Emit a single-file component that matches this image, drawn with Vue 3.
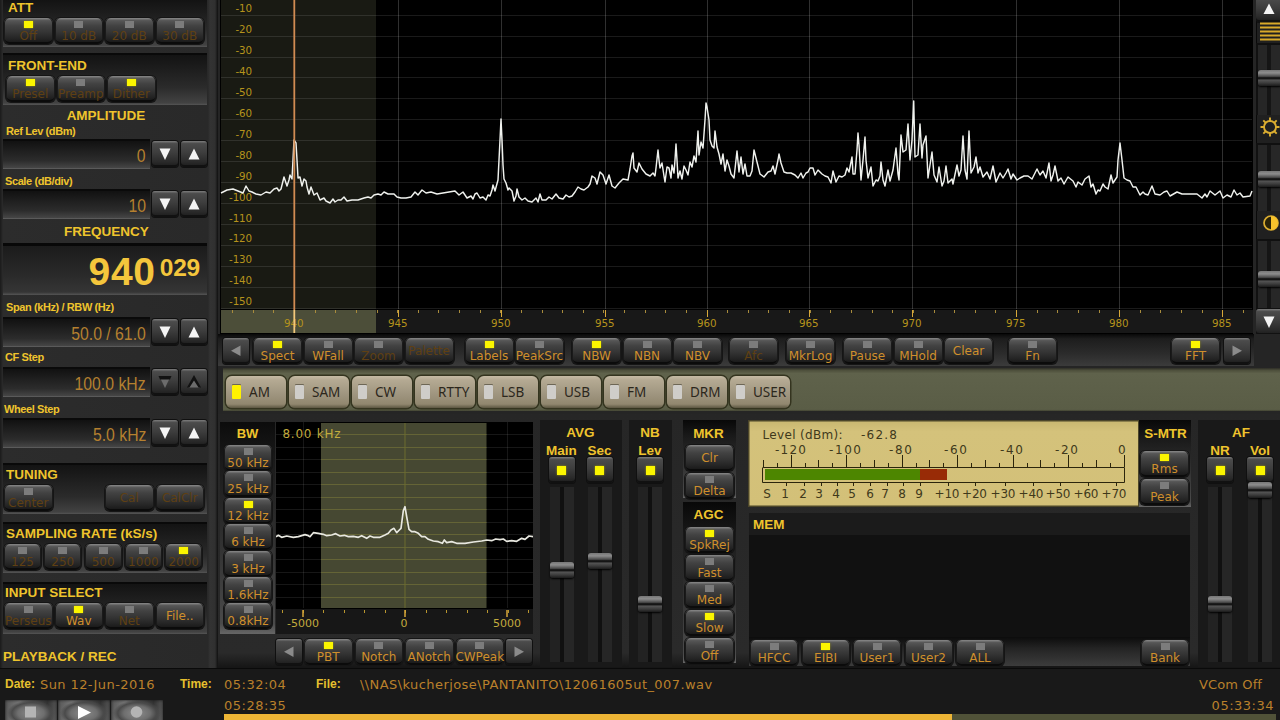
<script setup>
const att = [
  { t: 'Off', on: true, dim: true }, { t: '10 dB', dim: true }, { t: '20 dB', dim: true }, { t: '30 dB', dim: true },
]
const front = [
  { t: 'Presel', on: true, dim: true }, { t: 'Preamp', dim: true }, { t: 'Dither', on: true, dim: true },
]
const fields = {
  amp: [{ label: 'Ref Lev (dBm)', value: '0', k: 'a' }, { label: 'Scale (dB/div)', value: '10', k: 'b' }],
  freq: [
    { label: 'Span (kHz) / RBW (Hz)', value: '50.0 / 61.0', k: 'c' },
    { label: 'CF Step', value: '100.0 kHz', k: 'd', off: true },
    { label: 'Wheel Step', value: '5.0 kHz', k: 'e' },
  ],
}
const tuning = [{ t: 'Center', dim: true }, { gap: true }, { t: 'Cal', dim: true, plain: true }, { t: 'CalClr', dim: true, plain: true }]
const rates = [
  { t: '125', dim: true }, { t: '250', dim: true }, { t: '500', dim: true }, { t: '1000', dim: true }, { t: '2000', dim: true, on: true },
]
const inputs = [{ t: 'Perseus', dim: true }, { t: 'Wav', on: true }, { t: 'Net', dim: true }, { t: 'File..', plain: true }]

const tools = [
  [{ t: 'Spect', on: true }, { t: 'WFall' }, { t: 'Zoom', dim: true }, { t: 'Palette', dim: true, plain: true }],
  [{ t: 'Labels', on: true }, { t: 'PeakSrc' }],
  [{ t: 'NBW', on: true }, { t: 'NBN' }, { t: 'NBV' }],
  [{ t: 'Afc', dim: true }],
  [{ t: 'MkrLog' }],
  [{ t: 'Pause' }, { t: 'MHold' }, { t: 'Clear', plain: true }],
  [{ t: 'Fn' }],
  [{ t: 'FFT', on: true }],
]
const modes = ['AM', 'SAM', 'CW', 'RTTY', 'LSB', 'USB', 'FM', 'DRM', 'USER']
const bws = ['50 kHz', '25 kHz', '12 kHz', '6 kHz', '3 kHz', '1.6kHz', '0.8kHz']
const filters = [{ t: 'PBT', on: true }, { t: 'Notch' }, { t: 'ANotch' }, { t: 'CWPeak' }]
const agc = [{ t: 'SpkRej', on: true }, { t: 'Fast' }, { t: 'Med' }, { t: 'Slow', on: true }, { t: 'Off' }]
const mems = [{ t: 'HFCC' }, { t: 'EIBI', on: true }, { t: 'User1' }, { t: 'User2' }, { t: 'ALL' }]

const dbLines = Array.from({ length: 15 }, (_, i) => ({ db: -10 * (i + 1), y: Math.round(14.6 + i * 20.95) + 0.5, ty: 12 + i * 20.95 }))
const fLines = [294.5, 398.5, 501.5, 605.5, 707.5, 809.5, 912.5, 1016.5, 1119.5, 1222.5].map((x, i) => ({ x, f: 940 + i * 5 }))
const fTicks = Array.from({ length: 50 }, (_, i) => Math.round(294 + (i - 3) * 20.63) + 0.5).filter((x) => x < 1252)

const trace = `221,193 227,190 233,189 238,191 243,193 246,186 249,191 252,192 256,194 261,195 266,192 270,193 274,189 277,188 279,191 281,189 283,181 284,177 287,186 289,180 290,175 292,179 293,160 294,140 296,143 297,160 298,178 300,177 302,186 304,179 306,181 307,187 309,194 311,187 314,195 317,193 320,200 324,198 326,201 330,203 333,199 335,202 338,200 341,200 344,197 347,201 352,200 358,200 364,198 368,197 371,198 374,195 378,194 381,195 384,192 388,194 394,194 397,197 401,198 406,198 411,197 415,192 418,195 422,190 426,193 431,192 437,194 443,193 449,192 455,191 459,195 463,192 467,198 471,196 473,199 475,194 477,193 480,198 483,197 486,200 488,195 490,196 492,190 493,185 495,191 498,180 499,160 500,140 501,119 502,140 503,165 504,179 506,183 508,190 509,188 512,191 514,201 516,196 517,189 519,197 522,200 525,198 528,201 532,202 536,198 538,202 540,194 542,200 546,200 549,197 552,199 556,194 559,198 563,199 566,195 569,197 572,196 575,192 578,187 581,189 584,190 588,187 590,184 592,176 595,178 597,184 600,172 603,175 606,184 609,175 612,186 615,188 619,183 623,179 628,180 630,169 632,156 633,153 634,168 637,172 639,163 642,169 646,174 650,176 653,173 655,176 656,168 658,150 659,160 660,168 662,163 664,176 665,182 667,167 669,168 671,178 672,165 674,173 675,160 676,144 677,160 678,178 680,171 682,179 684,166 686,170 688,175 690,162 692,167 694,156 696,162 698,131 699,155 701,142 703,148 705,120 706,103 707,107 709,120 710,140 712,146 714,148 715,131 717,147 719,154 721,164 723,154 725,171 727,160 729,166 731,174 734,178 737,151 739,172 741,157 743,174 745,164 747,176 750,176 752,171 754,150 757,162 760,174 764,177 768,172 771,171 773,166 775,174 778,160 779,154 781,163 784,172 787,173 791,173 795,175 798,178 801,173 803,178 806,173 808,172 810,168 813,168 815,175 818,170 822,174 825,176 828,177 831,183 833,171 836,182 839,176 842,177 845,175 847,168 849,172 852,157 853,174 855,174 857,150 858,133 859,145 861,180 863,160 865,137 866,160 868,178 871,167 873,186 876,180 878,181 880,176 881,162 883,180 885,186 888,170 890,181 893,170 896,148 898,174 899,180 901,135 903,152 906,150 908,124 910,160 912,140 913.7,101 915,157 918,155 920,124 922,158 923,145 926,136 928,178 932,152 934,175 937,182 939,167 942,186 944,181 946,166 948,183 952,179 953,184 957,165 959,176 961,170 963,136 965,170 967,179 969,131 971,173 974,167 976,157 978,173 980,167 983,177 987,172 990,179 993,166 996,182 1000,173 1003,178 1006,173 1008,169 1011,179 1013,174 1017,180 1020,178 1024,176 1028,176 1032,179 1037,169 1040,175 1043,171 1046,178 1049,163 1051,181 1053,175 1055,166 1058,181 1061,178 1064,184 1068,177 1073,181 1076,187 1078,182 1082,185 1085,179 1089,176 1091,187 1093,184 1096,194 1098,190 1100,191 1103,184 1105,187 1108,189 1111,175 1113,183 1117,177 1118,160 1120,143 1122,160 1124,178 1127,180 1130,181 1133,187 1136,187 1140,195 1143,192 1145,194 1148,195 1152,186 1155,194 1160,195 1164,192 1167,191 1170,196 1177,192 1182,194 1188,194 1197,194 1202,198 1205,194 1207,197 1210,191 1215,195 1220,191 1223,198 1227,195 1231,197 1234,190 1237,195 1240,193 1243,197 1250,196 1252,191`
const passTrace = `183,350 190,346 200,352 215,348 235,352 250,350 270,344 280,347 285,350 295,338 310,340 325,343 335,347 350,345 362,341 375,348 388,346 400,350 415,349 430,352 440,347 455,355 465,348 475,352 495,352 510,345 520,340 528,330 537,325 545,338 553,330 558,325 565,272 570,260 575,290 582,328 590,335 600,335 610,340 620,350 630,350 640,358 655,363 670,365 682,370 688,360 695,368 710,365 725,370 750,370 775,366 800,363 815,360 830,362 842,357 855,359 865,357 875,364 890,362 905,364 920,355 930,358 942,348 955,350`
const passRows = Array.from({ length: 14 }, (_, i) => Math.round(434 + i * 12.5) + 0.5)
const passTicks = Array.from({ length: 13 }, (_, i) => Math.round(282 + i * 20.5) + 0.5)

const meterTop = Array.from({ length: 27 }, (_, i) => ({ x: Math.round(763 + i * 13.87) + 0.5, y: i % 4 === 2 ? 455 : i % 4 === 0 ? 460 : 463 }))
const meterDb = [['-120', 775, 31], ['-100', 829, 32], ['-80', 889, 23], ['-60', 944, 23], ['-40', 1000, 23], ['-20', 1055, 23], ['0', 1118, 8]]
const meterS = [['S', 767], ['1', 785], ['2', 803], ['3', 819], ['4', 836], ['5', 852], ['6', 870], ['7', 885], ['8', 902], ['9', 919]]
const meterPlus = [['+10', 947], ['+20', 974.5], ['+30', 1003], ['+40', 1031], ['+50', 1058], ['+60', 1086], ['+70', 1114]]
const meterLow = [786.5, 804.5, 821.5, 837.5, 853.5, 870.5, 887.5, 903.5, 920.5, 948.5, 975.5, 1005.5, 1033.5, 1060.5, 1088.5, 1116.5]
const rail = ['menu', 'sun', 'contrast']
</script>

<template>
  <div class="radio">
    <div class="top">
      <aside class="left">
        <section class="sec s-att">
          <h3>ATT</h3>
          <div class="keys"><button v-for="b in att" :key="b.t" class="btn" :class="b"><i></i><span>{{ b.t }}</span></button></div>
        </section>
        <section class="sec s-front">
          <h3>FRONT-END</h3>
          <div class="keys"><button v-for="b in front" :key="b.t" class="btn" :class="b"><i></i><span>{{ b.t }}</span></button></div>
        </section>
        <h2 class="h-amp">AMPLITUDE</h2>
        <template v-for="f in fields.amp" :key="f.k">
          <label :class="'l-' + f.k">{{ f.label }}</label>
          <div class="frow">
            <div class="field"><span>{{ f.value }}</span></div>
            <button class="sq"><svg viewBox="0 0 26 26"><path d="M7.500 7.500H18.500L13 19Z" /></svg></button>
            <button class="sq"><svg viewBox="0 0 26 26"><path d="M7.500 18.500H18.500L13 7.500Z" /></svg></button>
          </div>
        </template>
        <h2 class="h-freq">FREQUENCY</h2>
        <div class="freq"><b>940</b><em>029</em></div>
        <template v-for="f in fields.freq" :key="f.k">
          <label :class="'l-' + f.k">{{ f.label }}</label>
          <div class="frow">
            <div class="field"><span>{{ f.value }}</span></div>
            <button class="sq" :class="{ off: f.off }"><svg viewBox="0 0 26 26"><path d="M7.500 7.500H18.500L13 19Z" /><path v-if="f.off" class="sh" d="M6.500 7H19.500L18 10.500H8Z" /></svg></button>
            <button class="sq" :class="{ off: f.off }"><svg viewBox="0 0 26 26"><path d="M7.500 18.500H18.500L13 7.500Z" /><path v-if="f.off" class="sh" d="M6 18.500L13 6L20 18.500H17.500L13 11.500L8.500 18.500Z" /></svg></button>
          </div>
        </template>
        <section class="sec s-tune">
          <h3>TUNING</h3>
          <div class="keys"><template v-for="(b, i) in tuning" :key="i"><div v-if="b.gap" class="hole"></div><button v-else class="btn" :class="b"><i></i><span>{{ b.t }}</span></button></template></div>
        </section>
        <section class="sec s-rate">
          <h3>SAMPLING RATE (kS/s)</h3>
          <div class="keys narrow"><button v-for="b in rates" :key="b.t" class="btn" :class="b"><i></i><span>{{ b.t }}</span></button></div>
        </section>
        <section class="sec s-input">
          <h3>INPUT SELECT</h3>
          <div class="keys"><button v-for="b in inputs" :key="b.t" class="btn" :class="b"><i></i><span>{{ b.t }}</span></button></div>
        </section>
        <h3 class="play">PLAYBACK / REC</h3>
      </aside>

      <main class="main">
        <div class="plotrow">
          <svg class="plot" viewBox="220 0 1033 334" width="1033" height="334">
            <rect x="220" y="0" width="1033" height="334" fill="#000" />
            <rect x="221" y="0" width="155" height="309" fill="#191a13" />
            <rect x="221" y="310" width="1032" height="23" fill="#181818" />
            <rect x="221" y="310" width="155" height="23" fill="#4c4e39" />
            <g stroke="#fff" stroke-opacity=".1"><line v-for="l in dbLines" :key="l.db" x1="221" x2="1252" :y1="l.y" :y2="l.y" /></g>
            <g stroke="#fff" stroke-opacity=".19"><line v-for="l in fLines" :key="l.f" :x1="l.x" :x2="l.x" y1="0" y2="309" /></g>
            <g class="ax" text-anchor="end"><text v-for="l in dbLines" :key="l.db" x="252" :y="l.ty">{{ l.db }}</text></g>
            <g stroke="#a88b3c"><line v-for="x in fTicks" :key="x" :x1="x" :x2="x" y1="310" y2="313" /></g>
            <g stroke="#d8a83a"><line v-for="l in fLines" :key="l.f" :x1="l.x" :x2="l.x" y1="310" y2="317" /></g>
            <g class="ax" text-anchor="middle"><text v-for="l in fLines" :key="l.f" :x="l.x - 0.8" y="327">{{ l.f }}</text></g>
            <polyline :points="trace" fill="none" stroke="#f0f2ee" stroke-width="1.450" stroke-linejoin="round" />
            <line x1="294.300" x2="294.300" y1="0" y2="310" stroke="#d08b52" stroke-width="1.800" />
            <line x1="294.300" x2="294.300" y1="310" y2="333" stroke="#f2c87a" stroke-width="1.800" />
          </svg>
          <div class="rail">
            <button class="sq up"><svg viewBox="0 0 26 26"><path d="M7.500 18H18.500L13 7.500Z" /></svg></button>
            <template v-for="r in rail" :key="r">
              <div class="ric" :class="r">
                <svg v-if="r === 'menu'" viewBox="0 0 24 24"><path d="M4 4.500H24M4 8.500H24M4 12.500H24M4 16.500H24M4 20.500H24" stroke="#d8a929" stroke-width="2" /></svg>
                <svg v-else-if="r === 'sun'" viewBox="0 0 24 24" fill="none" stroke="#dcae31" stroke-width="1.900"><circle cx="14" cy="12" r="6" /><path d="M14 6V2.500M14 18V21.500M8 12H4.500M20 12H23.500M9.800 7.800L7.300 5.300M18.200 7.800L20.700 5.300M9.800 16.200L7.300 18.700M18.200 16.200L20.700 18.700" /></svg>
                <svg v-else viewBox="0 0 24 24"><circle cx="15" cy="12" r="7" fill="#2a2308" stroke="#dcae31" stroke-width="1.700" /><path d="M15 5a7 7 0 0 1 0 14Z" fill="#f6c22c" /></svg>
              </div>
              <div class="rtrack" :class="'t-' + r"><div class="knob"></div></div>
            </template>
            <button class="sq"><svg viewBox="0 0 26 26"><path d="M7.500 7.500H18.500L13 19Z" /></svg></button>
          </div>
        </div>

        <div class="tools">
          <button class="sq grey"><svg viewBox="0 0 26 26"><path d="M17.500 7.500V18L8 12.800Z" /></svg></button>
          <div v-for="(g, i) in tools" :key="i" class="group" :class="'g' + i">
            <button v-for="b in g" :key="b.t" class="btn" :class="b"><i></i><span>{{ b.t }}</span></button>
          </div>
          <button class="sq grey"><svg viewBox="0 0 26 26"><path d="M8.500 7.500V18L18 12.800Z" /></svg></button>
        </div>

        <div class="modes">
          <button v-for="(m, i) in modes" :key="m" class="mode" :class="{ on: i === 0 }"><i></i><span>{{ m }}</span></button>
        </div>

        <div class="lower">
          <div class="bw">
            <h3>BW</h3>
            <button v-for="(b, i) in bws" :key="b" class="btn" :class="{ on: i === 2 }"><i></i><span>{{ b }}</span></button>
          </div>
          <div class="pass">
            <svg viewBox="276 422 257 212" width="257" height="212">
              <rect x="276" y="422" width="257" height="212" fill="#000" />
              <rect x="276" y="609" width="257" height="25" fill="#171717" />
              <rect x="321" y="423" width="165.500" height="185" fill="#464832" />
              <g stroke="#fff" stroke-opacity=".09"><line v-for="y in passRows" :key="y" x1="276" x2="533" :y1="y" :y2="y" /><line x1="303.500" x2="303.500" y1="422" y2="608" /><line x1="507.500" x2="507.500" y1="422" y2="608" /></g>
              <g stroke="#6b6b30" stroke-opacity=".65"><line v-for="y in passRows" :key="y" x1="321" x2="486.500" :y1="y" :y2="y" /><line x1="405" x2="405" y1="423" y2="608" stroke-width="1.600" /></g>
              <g stroke="#b8962f"><line v-for="x in passTicks" :key="x" :x1="x" :x2="x" y1="610" y2="613" /></g>
              <path d="M303 610V617M405 610V617M507 610V617" stroke="#d8a83a" stroke-width="1.500" />
              <text class="khz" x="282.500" y="438" textLength="58">8.00 kHz</text>
              <g class="khz sm" text-anchor="middle"><text x="303" y="626.500">-5000</text><text x="404" y="626.500">0</text><text x="507" y="626.500">5000</text></g>
              <g transform="translate(215 420) scale(.33333)"><polyline :points="passTrace" fill="none" stroke="#e8e8e0" stroke-width="5" stroke-linejoin="round" /></g>
            </svg>
            <div class="filters">
              <button class="sq grey"><svg viewBox="0 0 26 26"><path d="M17.500 7.500V18L8 12.800Z" /></svg></button>
              <button v-for="b in filters" :key="b.t" class="btn" :class="b"><i></i><span>{{ b.t }}</span></button>
              <button class="sq grey"><svg viewBox="0 0 26 26"><path d="M8.500 7.500V18L18 12.800Z" /></svg></button>
            </div>
          </div>
          <div class="sliders avg">
            <h3>AVG</h3>
            <div class="cols">
              <div class="sl p75"><h4>Main</h4><button class="sq led"><i></i></button><div class="track"><div class="knob"></div></div></div>
              <div class="sl p66"><h4>Sec</h4><button class="sq led"><i></i></button><div class="track"><div class="knob"></div></div></div>
            </div>
          </div>
          <div class="sliders nb">
            <h3>NB</h3>
            <div class="cols">
              <div class="sl p109"><h4>Lev</h4><button class="sq led"><i></i></button><div class="track"><div class="knob"></div></div></div>
            </div>
          </div>
          <div class="stack">
            <div class="box mkr">
              <h3>MKR</h3>
              <button class="btn plain"><span>Clr</span></button>
              <button class="btn"><i></i><span>Delta</span></button>
            </div>
            <div class="box agc">
              <h3>AGC</h3>
              <button v-for="b in agc" :key="b.t" class="btn" :class="b"><i></i><span>{{ b.t }}</span></button>
            </div>
          </div>
          <div class="right">
            <div class="meterrow">
              <svg class="meter" viewBox="748 420 391 87" width="391" height="87">
                <defs><linearGradient id="mg" x1="0" y1="0" x2="0" y2="1"><stop offset="0" stop-color="#c9b871" /><stop offset=".12" stop-color="#d4c27b" /><stop offset="1" stop-color="#d3c078" /></linearGradient></defs>
                <rect x="748" y="420" width="391" height="87" fill="#4b4529" />
                <rect x="749.500" y="421.500" width="388.500" height="84" fill="url(#mg)" />
                <text x="762.500" y="438.500" textLength="80">Level (dBm):</text>
                <text x="861" y="438.500" textLength="36">-62.8</text>
                <text v-for="m in meterDb" :key="m[0]" :x="m[1]" y="453.500" :textLength="m[2]">{{ m[0] }}</text>
                <rect x="765" y="469" width="155" height="11" fill="#4d8600" />
                <rect x="920" y="469" width="27" height="11" fill="#982b06" />
                <path d="M763 467.500H1124.500V482.500H762.500V467.500" fill="none" stroke="#2b250c" />
                <g stroke="#2b250c"><line v-for="t in meterTop" :key="t.x" :x1="t.x" :x2="t.x" :y1="t.y" y2="467" /><line v-for="x in meterLow" :key="x" :x1="x" :x2="x" y1="483" y2="486" /></g>
                <g text-anchor="middle"><text v-for="m in meterS" :key="m[0]" :x="m[1]" y="498">{{ m[0] }}</text><text v-for="m in meterPlus" :key="m[0]" :x="m[1]" y="498" textLength="25">{{ m[0] }}</text></g>
              </svg>
              <div class="box smtr">
                <h3>S-MTR</h3>
                <button class="btn on"><i></i><span>Rms</span></button>
                <button class="btn"><i></i><span>Peak</span></button>
              </div>
            </div>
            <div class="mem">
              <h3>MEM</h3>
              <div class="list"></div>
              <div class="memkeys">
                <button v-for="b in mems" :key="b.t" class="btn" :class="b"><i></i><span>{{ b.t }}</span></button>
                <button class="btn bank"><i></i><span>Bank</span></button>
              </div>
            </div>
          </div>
          <div class="sliders af">
            <h3>AF</h3>
            <div class="cols">
              <div class="sl p109"><h4>NR</h4><button class="sq led"><i></i></button><div class="track"><div class="knob"></div></div></div>
              <div class="sl p0"><h4>Vol</h4><button class="sq led"><i></i></button><div class="track"><div class="knob"></div></div></div>
            </div>
          </div>
        </div>
      </main>
    </div>

    <footer class="foot">
      <div class="info">
        <b class="f1">Date:</b><span class="f2">Sun 12-Jun-2016</span><b class="f3">Time:</b><span class="f4">05:32:04</span><b class="f5">File:</b><span class="f6">\\NAS\kucherjose\PANTANITO\12061605ut_007.wav</span><span class="f7">VCom Off</span>
      </div>
      <div class="transport">
        <div class="tbtns">
          <button><svg viewBox="0 0 52 34"><rect x="20" y="8.500" width="11" height="11" fill="#b4b4b4" /></svg></button>
          <button><svg viewBox="0 0 52 34"><path d="M20 8L33 14.500L20 21Z" fill="#fff" /></svg></button>
          <button><svg viewBox="0 0 52 34"><circle cx="25.500" cy="14" r="5.800" fill="#b4b4b4" /></svg></button>
        </div>
        <div class="prog">
          <div class="times"><span>05:28:35</span><span>05:33:34</span></div>
          <div class="bar"><div></div></div>
        </div>
      </div>
    </footer>
  </div>
</template>

<style>
html, body { margin: 0; background: #1c1c1c; overflow: hidden; }
</style>

<style scoped>
* { box-sizing: border-box; margin: 0; }
.radio { width: 1280px; height: 720px; overflow: hidden; background: #252525; font-family: "DejaVu Sans", sans-serif; color: #d4922b; display: flex; flex-direction: column; }
.top { display: flex; height: 668px; flex: none; }
button { padding: 0; border: 0; font: inherit; color: inherit; flex: none; display: block; }
h2, h3, h4, label { font-family: "Liberation Sans", Arial, sans-serif; font-weight: bold; color: #efc42d; white-space: nowrap; }
h3 { font-size: 13.500px; line-height: 16px; }
h2 { font-size: 13.500px; width: 206px; text-align: center; }
h4 { font-size: 13.500px; line-height: 14px; }

.btn { width: 49px; height: 26px; border-radius: 5px; background: linear-gradient(#8a8a8a 0, #565656 10%, #424242 30%, #343434 55%, #252525 78%, #151515); box-shadow: inset 1px 0 #1a1a1a, inset -1px 0 #1a1a1a, inset 0 -2px #0b0b0b, 0 0 0 1px #151515; display: flex; flex-direction: column; align-items: center; }
.btn i { width: 9px; height: 7px; margin-top: 3px; background: #7c7c7c; flex: none; }
.btn.on i { background: #fbf500; box-shadow: 0 0 2px #a39d00; }
.btn span { font-size: 12px; line-height: 14px; margin-top: 1px; white-space: pre; color: #cf8f2c; }
.btn.dim span { color: #5f4013; }
.btn.plain i { display: none; }
.btn.plain span { margin-top: 6px; }
.sq { width: 26px; height: 26px; border-radius: 3px; background: linear-gradient(#7d7d7d 0, #4b4b4b 10%, #3d3d3d 45%, #2a2a2a 80%, #1b1b1b); box-shadow: 0 0 0 1px #101010, inset 0 -2px #111; }
.sq svg { display: block; width: 26px; height: 26px; fill: #f4f4f4; }
.sq.grey svg { fill: #8b8b8b; }
.sq.off svg { fill: #6c6c6c; }
.sq.off .sh { fill: #121212; }
.sq.led { display: flex; align-items: center; justify-content: center; }
.sq.led i { width: 9px; height: 9px; background: #fbf500; box-shadow: 0 0 2px #a39d00; }

.left { width: 218px; padding-left: 3px; background: linear-gradient(90deg, #1a1a1a 0, #2c2c2c 3px, #292929 208px, #333 210px, #303030 215px, #101010 218px); flex: none; }
.sec { width: 204px; background: linear-gradient(#131313 0, #1e1e1e 30%, #2b2b2b 65%, #424242 96%, #555 100%); border-top: 2px solid #090909; }
.sec h3 { padding-left: 5px; height: 20px; }
.keys { display: flex; gap: 2px; padding-left: 1px; }
.keys .btn { width: 48.500px; }
.hole { width: 48.500px; }
.keys.narrow { gap: 3.300px; }
.keys.narrow .btn { width: 37px; }
.s-att { height: 47px; border-top: 0; }
.s-att h3 { height: 18px; line-height: 16px; }
.s-front { height: 52px; margin-top: 6px; }
.s-front h3 { height: 21px; padding-top: 3px; }
.s-front .keys { padding-left: 3px; }
.s-tune { margin-top: 15px; height: 51px; }
.s-tune h3, .s-rate h3, .s-input h3 { padding-left: 3px; padding-top: 2px; }
.s-rate { margin-top: 8px; height: 51px; }
.s-input { margin-top: 9px; height: 52px; }
.s-input h3 { height: 19px; padding-left: 2px; padding-top: 1px; }
.play { line-height: 46px !important; letter-spacing: 0; }
.h-amp { height: 20px; line-height: 21px; }
.h-freq { height: 24px; line-height: 26px; padding-left: 1px; }
label { display: block; font-size: 11px; padding-left: 3px; letter-spacing: -.4px; }
.l-a { height: 14px; line-height: 13px; }
.l-b { height: 20px; line-height: 24px; padding-left: 2px; }
.l-c { height: 22px; line-height: 24px; }
.l-d { height: 20px; line-height: 20px; padding-left: 2px; }
.l-e { height: 21px; line-height: 25px; padding-left: 1px; }
.frow { display: flex; height: 30px; align-items: flex-start; }
.field { width: 147px; height: 30px; padding-right: 4px; text-align: right; font-family: "Liberation Sans", sans-serif; font-size: 19px; line-height: 29px; color: #b5802f; background: linear-gradient(#111 0, #1d1d1d 30%, #2c2c2c 70%, #444 95%, #666); border-top: 2px solid #0a0a0a; }
.field span { display: inline-block; transform: scaleX(.83); transform-origin: 100% 50%; }
.frow .sq { margin: 2px 0 0 2px; }
.frow .sq + .sq { margin-left: 3px; }
.freq { width: 204px; height: 52px; background: linear-gradient(#1b1b1b, #2a2a2a 60%, #353535 94%, #555); border-top: 3px solid #080808; display: flex; justify-content: flex-end; padding-right: 7px; font-family: "Liberation Sans", sans-serif; color: #f4c63c; }
.freq b { font-size: 39px; line-height: 52px; letter-spacing: .7px; }
.freq em { font-style: normal; font-weight: bold; font-size: 24.500px; line-height: 43px; margin-left: 4px; letter-spacing: -.2px; }

.main { flex: 1; min-width: 0; background: #252525; }
.plotrow { display: flex; height: 334px; padding-left: 2px; }
.plot { display: block; flex: none; }
.ax text { font-size: 10.300px; fill: #b5931c; letter-spacing: -.1px; }
.rail { margin-left: 3px; width: 24px; overflow: hidden; background: #202020; box-shadow: inset 1px 0 #0a0a0a; }
.rail .sq.up { margin-top: -4px; }
.ric svg { display: block; width: 24px; height: 24px; }
.ric { height: 28px; }
.menu { margin-top: -3px; height: 24px; }
.rtrack { background: linear-gradient(90deg, #111 0 2px, #262626 2px 11px, #151515 11px 15px, #272727 15px); border-top: 2px solid #101010; }
.t-menu { height: 72px; padding-top: 25px; }
.t-sun { height: 68px; padding-top: 26px; }
.t-contrast { height: 70px; padding-top: 30px; }
.rtrack .knob { margin-left: 2px; }
.knob { width: 24px; height: 16px; border-radius: 3px; background: linear-gradient(#777 0, #8d8d8d 18%, #4a4a4a 40%, #151515 48% 56%, #555 62%, #3d3d3d 80%, #1b1b1b); box-shadow: 0 1px 2px #000; }

.tools { display: flex; height: 32px; padding: 4px 0 0 5px; background: linear-gradient(#080808 0, #1d1d1d 15%, #2b2b2b 60%, #3b3b3b); margin-right: 26px; }
.tools .sq { width: 26px; }
.group { display: flex; gap: 1.500px; margin-left: 9px; }
.g0 { margin-left: 4px; }
.g1 { margin-left: 11px; }
.g2 { margin-left: 8px; }
.g3 { margin-left: 7px; }
.g4, .g5 { margin-left: 8px; }
.g6 { margin-left: 15px; }
.g7 { margin-left: 114px; margin-right: 4px; }
.modes { display: flex; gap: 3px; height: 46px; margin: 2px 0 0 5px; padding: 8px 0 0 3px; background: linear-gradient(#2d2d26 0, #4d4f3b 5%, #5f624b 12%, #5a5d46 90%, #444634 93%, #252525 94%); }
.mode { width: 60px; height: 32px; border-radius: 6px; background: linear-gradient(#c5bba5 0, #b5aa93 12%, #a09680 55%, #91876f 88%, #5c5641); box-shadow: 0 0 0 1.500px #34341f; display: flex; align-items: center; }
.mode i { width: 9px; height: 14px; margin: 0 8px 1px 6px; background: #cfcdc9; box-shadow: 0 -1px #6d6655; border-radius: 1px; flex: none; }
.mode.on i { background: #fff200; }
.mode span { font-family: "Noto Sans", sans-serif; font-size: 13.500px; color: #2c271c; letter-spacing: 0; line-height: 30px; }

.lower { display: flex; height: 254px; padding: 6px 0 0 2px; background: linear-gradient(#262626, #2a2a2a 94%, #151515); align-items: flex-start; }
.bw { width: 55px; height: 212px; margin-top: 2px; padding-left: 4px; background: linear-gradient(#0c0c0c, #1b1b1b 20%, #333 60%, #4a4a4a 95%, #666); }
.bw h3 { height: 23px; line-height: 23px; text-align: center; padding-right: 4px; font-size: 13px; }
.bw .btn { margin-bottom: .4px; width: 48px; }
.pass { margin-left: 1px; width: 257px; margin-top: 2px; }
.pass svg { display: block; }
.khz { font-size: 12px; fill: #c2ab3e; }
.khz.sm text { font-size: 11px; }
.filters { display: flex; gap: 2px; padding-top: 5px; }
.filters .btn { width: 48.500px; }
.sliders { height: 247px; background: #191919; }
.sliders h3 { text-align: center; height: 24px; padding-top: 5px; }
.cols { display: flex; }
.sl { display: flex; flex-direction: column; align-items: center; width: 38px; }
.sl h4 { height: 13px; display: flex; justify-content: center; }
.sl .track { width: 24px; height: 175px; margin-top: 4px; background: linear-gradient(90deg, #222 0 10px, #101010 10px 14px, #262626 14px); }
.sl .knob { position: relative; }
.p75 .knob { top: 75px; }
.p66 .knob { top: 66px; }
.p109 .knob { top: 109px; }
.p0 .knob { top: -5px; }
.avg { width: 82px; margin-left: 7px; }
.avg .cols { padding-left: 2.500px; }
.avg h3 { padding-right: 1px; }
.nb { width: 43px; margin-left: 7px; }
.nb h3 { padding-right: 1px; }
.nb .cols { padding-left: 2px; }
.af { width: 82px; margin-left: 7px; }
.af h3 { padding-left: 4px; }
.af .cols { gap: 2px; padding-left: 3px; }
.stack { width: 53px; margin-left: 11px; }
.box { background: linear-gradient(#080808, #191919 20%, #333 60%, #4c4c4c 95%, #666); padding-left: 2px; }
.box h3 { text-align: center; padding-right: 4px; }
.mkr { height: 78px; }
.mkr h3 { height: 25px; line-height: 27px; }
.mkr .btn { margin-bottom: 2px; }
.agc { height: 161px; margin-top: 4px; }
.agc h3 { height: 25px; line-height: 25px; }
.agc .btn { margin-bottom: 1.700px; }
.right { margin-left: 12px; width: 443px; }
.meterrow { display: flex; }
.meter { display: block; flex: none; }
.meter text { font-size: 12px; fill: #40391b; }
.smtr { width: 52px; height: 87px; padding-left: 1px; }
.smtr h3 { height: 31px; line-height: 27px; padding: 0; }
.smtr .btn { margin-bottom: 2px; }
.mem { margin: 6px 0 0 1px; width: 441px; height: 153px; background: #1b1b1b; }
.mem h3 { height: 22px; padding: 4px 0 0 4px; font-size: 13.500px; }
.list { height: 102px; background: #111; }
.memkeys { display: flex; gap: 3.500px; height: 29px; padding: 3px 1px 0 1px; background: linear-gradient(#0c0c0c, #242424 40%, #3c3c3c); }
.memkeys .btn { width: 48px; }
.memkeys .bank { margin-left: auto; }

.foot { height: 52px; background: #191919; border-top: 1px solid #0a0a0a; flex: none; font-size: 13px; }
.info { display: flex; height: 31px; line-height: 31px; padding-left: 5px; white-space: nowrap; color: #b9802b; }
.info b { font-family: "Liberation Sans", sans-serif; color: #e6c02e; font-size: 12px; }
.f1 { width: 35px; }
.f2 { width: 140px; letter-spacing: .4px; }
.f3 { width: 44px; }
.f4 { width: 92px; letter-spacing: .5px; }
.f5 { width: 44px; }
.f6 { letter-spacing: .42px; }
.f7 { margin-left: auto; padding-right: 18px; letter-spacing: .1px; }
.transport { display: flex; }
.tbtns { display: flex; gap: 1px; padding-left: 5px; width: 224px; flex: none; }
.tbtns button { width: 52px; height: 30px; background: radial-gradient(ellipse 24px 13px at 50% 44%, #8c8c8c 0, #6e6e6e 55%, #4a4a4a 80%, transparent 100%), linear-gradient(100deg, #555, #777 25%, #333 75%, #666); box-shadow: inset 0 0 3px #111; }
.tbtns svg { display: block; width: 52px; height: 34px; margin-top: -2px; }
.prog { width: 1052px; color: #b9802b; }
.times { display: flex; justify-content: space-between; height: 14px; line-height: 11px; letter-spacing: .5px; padding-right: 2px; }
.bar { height: 8px; background: #505238; }
.bar div { width: 728px; height: 8px; background: #edb536; }
</style>
